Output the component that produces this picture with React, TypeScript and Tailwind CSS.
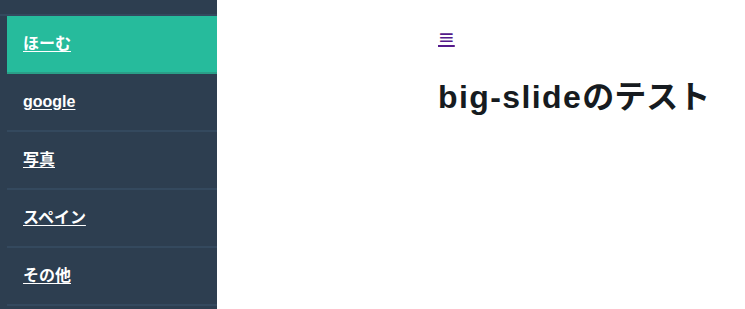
import React from 'react';

const items = [
  { label: 'ほーむ', active: true },
  { label: 'google' },
  { label: '写真' },
  { label: 'スペイン' },
  { label: 'その他' },
];

const font = { fontFamily: '"Liberation Sans", "Noto Sans CJK JP", sans-serif' };

export default function App() {
  return (
    <div className="flex h-screen bg-white" style={font}>
      {/* Sidebar */}
      <nav className="w-[217px] shrink-0 bg-[#2d3e50] pt-[14px]">
        <ul className="border-t-2 border-[#34495e]">
          {items.map((item) => (
            <li
              key={item.label}
              className={`ml-[7px] h-[58px] border-b-2 border-[#34495e] ${item.active ? 'bg-[#26bb9c] border-b-[#2a9f88]' : ''}`}
            >
              <a href="#" className="flex h-full items-center pl-4 text-[16px] font-bold text-white">
                <span className="underline underline-offset-2">{item.label}</span>
              </a>
            </li>
          ))}
        </ul>
      </nav>

      {/* Main */}
      <main className="flex-1 pl-[221px] pt-[25px]">
        <a href="#" className="text-[20px] leading-6 text-[#551a8b] underline underline-offset-1" style={{ fontFamily: '"DejaVu Sans", sans-serif' }}>
          ≡
        </a>
        <h1 className="mt-[26px] text-[32px] leading-[40px] font-bold text-[#161b20]">
          <span className="tracking-[1.4px]">big-slide</span>のテスト
        </h1>
      </main>
    </div>
  );
}
